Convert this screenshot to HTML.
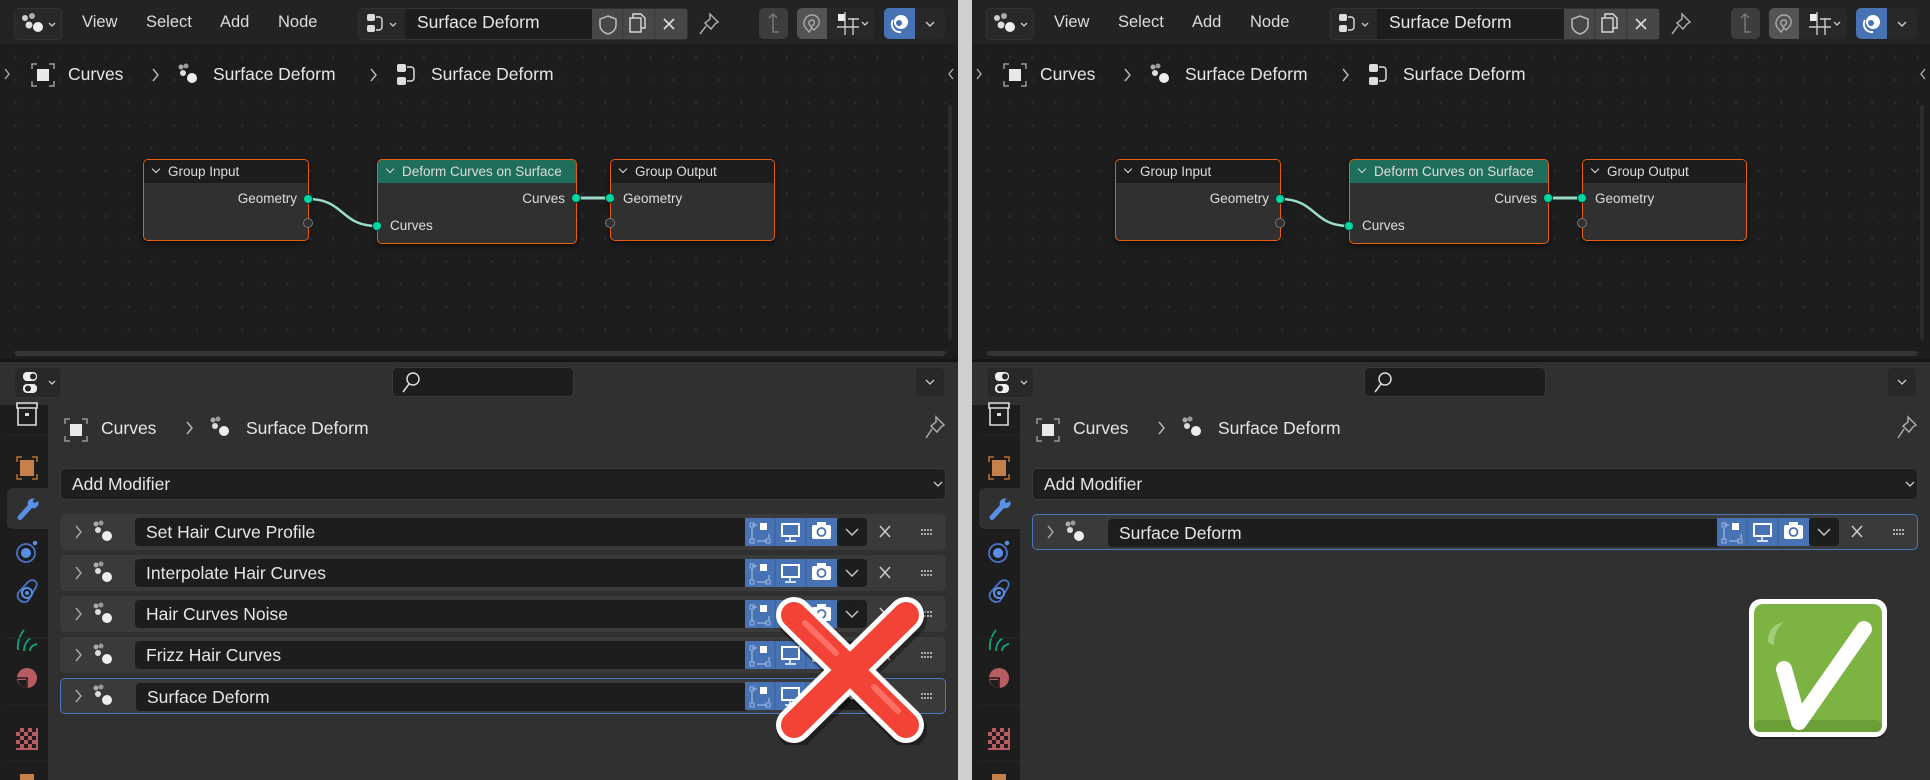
<!DOCTYPE html>
<html><head><meta charset="utf-8"><style>
*{box-sizing:border-box;margin:0;padding:0}
body{width:1930px;height:780px;background:#cfcfcf;position:relative;overflow:hidden;font-family:"Liberation Sans","DejaVu Sans",sans-serif;color:#e0e0e0}
.panel{position:absolute;top:0;width:958px;height:780px;background:#1d1d1d;overflow:hidden}
.a{position:absolute}
.hdr{left:0;top:0;width:958px;height:44px;background:#232323}
.ed{left:0;top:44px;width:958px;height:315px;background-color:#1d1d1d;background-image:radial-gradient(circle,#2a2a2a 1.3px,transparent 1.6px);background-size:22.7px 22.7px;background-position:4px 2px}
.btn{border-radius:5px;background:#282828;border:1px solid #333}
.t16{font-size:16.5px;color:#dcdcdc;line-height:20px}
.t17{font-size:17.5px;color:#e6e6e6;line-height:20px}
.node{border:1.5px solid #e8600c;border-radius:5px;background:#303030;box-shadow:0 3px 6px rgba(0,0,0,.5)}
.nh{position:absolute;left:0;top:0;right:0;height:23px;background:#1d1d1d;border-radius:4px 4px 0 0;font-size:13.5px;color:#ddd;line-height:23px;padding-left:24px;white-space:nowrap}
.nh:before{content:"";position:absolute;left:9px;top:6px;width:5px;height:5px;border-right:1.4px solid #ddd;border-bottom:1.4px solid #ddd;transform:rotate(45deg)}
.nt{position:absolute;font-size:13.5px;color:#ddd}
.sock{position:absolute;width:10px;height:10px;border-radius:50%;background:#00d6a3;border:1px solid #0a3a30}
.sock.e{background:#303030;border:1.3px solid #777}
.props{left:0;top:362px;width:958px;height:418px;background:#303030}
.tabs{left:0;top:405px;width:48px;height:375px;background:#1d1d1d}
.row{position:absolute;left:60px;width:886px;height:36px;background:#3a3a3a;border-radius:5px}
.row.sel{border:1px solid #4a77c2}
.nm{position:absolute;left:75px;top:4px;width:611px;height:28px;background:#1d1d1d;border-radius:4px 0 0 4px;font-size:17.5px;line-height:28px;padding-left:11px;color:#e6e6e6}
</style></head><body>

<div class="panel" style="left:0">
 <div class="a hdr"></div>
 <div class="a btn" style="left:14px;top:8px;width:48px;height:32px"></div>
 <svg class="a" style="left:20px;top:12px" width="40" height="24"><circle cx="5" cy="6" r="3" fill="#ccc"/><circle cx="12" cy="4" r="3" fill="#aaa"/><circle cx="9" cy="13" r="3.5" fill="#ddd"/><circle cx="18" cy="15" r="5" fill="#eee"/><path d="M29 11l3 3 3-3" stroke="#ccc" fill="none" stroke-width="1.3"/></svg>
 <div class="a t16" style="left:82px;top:12px">View</div>
 <div class="a t16" style="left:146px;top:12px">Select</div>
 <div class="a t16" style="left:220px;top:12px">Add</div>
 <div class="a t16" style="left:278px;top:12px">Node</div>
 <div class="a btn" style="left:358px;top:8px;width:330px;height:32px"></div>
 <svg class="a" style="left:364px;top:12px" width="38" height="24"><rect x="3" y="2" width="8" height="7" rx="2" fill="#ddd"/><rect x="3" y="13" width="8" height="7" rx="2" fill="#ddd"/><path d="M12 5h3a3 3 0 0 1 3 3v7a3 3 0 0 1-3 3h-3" stroke="#ddd" fill="none" stroke-width="1.4"/><path d="M26 11l3 3 3-3" stroke="#ccc" fill="none" stroke-width="1.3"/></svg>
 <div class="a" style="left:405px;top:9px;width:187px;height:30px;background:#1d1d1d"></div>
 <div class="a t17" style="left:417px;top:12px">Surface Deform</div>
 <div class="a" style="left:592px;top:9px;width:95px;height:30px;background:#474747"></div>
 <svg class="a" style="left:592px;top:9px" width="95" height="30"><path d="M16 7l8 3v6c0 5-4 8-8 9-4-1-8-4-8-9v-6z" stroke="#bbb" fill="none" stroke-width="1.5"/><rect x="38" y="9" width="11" height="14" stroke="#ddd" fill="none" stroke-width="1.4"/><path d="M41 9V5h8l4 4v10h-4" stroke="#ddd" fill="none" stroke-width="1.4"/><path d="M72 10l10 10M82 10l-10 10" stroke="#ddd" stroke-width="1.6"/><path d="M31 0v30M63 0v30" stroke="#3a3a3a"/></svg>
 <svg class="a" style="left:696px;top:10px" width="28" height="28"><path d="M14 4l8 8-3 2-4 5-6-6 5-4z M10 16l-6 8" stroke="#aaa" fill="none" stroke-width="1.5"/></svg>
 <div class="a" style="left:759px;top:8px;width:29px;height:31px;background:#3d3d3d;border-radius:5px"></div>
 <svg class="a" style="left:759px;top:8px" width="29" height="31"><path d="M10 10l4-4 4 4M14 6v18h6" stroke="#777" fill="none" stroke-width="1.5"/></svg>
 <div class="a" style="left:797px;top:8px;width:78px;height:31px;background:#282828;border-radius:5px"></div>
 <div class="a" style="left:797px;top:8px;width:30px;height:31px;background:#545454;border-radius:5px 0 0 5px"></div>
 <svg class="a" style="left:797px;top:8px" width="78" height="31"><path d="M12 24l-4-5c-3-5 1-12 7-12s9 6 6 11l-4 4-3-3 3-3c1-2 0-4-2-4s-4 2-3 4l3 4z" stroke="#aaa" fill="none" stroke-width="1.4"/><rect x="41" y="6" width="7" height="7" fill="#eee"/><path d="M48 4v23M40 19h22M56 10v17M51 11h11" stroke="#ccc" stroke-width="1.4"/><path d="M65 14l3 3 3-3" stroke="#ccc" fill="none" stroke-width="1.3"/></svg>
 <div class="a" style="left:884px;top:8px;width:61px;height:31px;background:#282828;border-radius:5px"></div>
 <div class="a" style="left:884px;top:8px;width:31px;height:31px;background:#4772b3;border-radius:5px 0 0 5px"></div>
 <svg class="a" style="left:884px;top:8px" width="61" height="31"><circle cx="17" cy="14" r="7" fill="#fff"/><path d="M9 12a8 8 0 0 0 8 12" stroke="#fff" fill="none" stroke-width="2"/><circle cx="15" cy="15" r="3" fill="#4772b3"/><path d="M42 14l4 4 4-4" stroke="#ccc" fill="none" stroke-width="1.4"/></svg>

 <div class="a ed"></div>
 <svg class="a" style="left:2px;top:66px" width="10" height="16"><path d="M3 3l4 5-4 5" stroke="#aaa" fill="none" stroke-width="1.4"/></svg>
 <svg class="a" style="left:30px;top:62px" width="26" height="26"><path d="M2 7V2h5M19 2h5v5M24 19v5h-5M7 24H2v-5" stroke="#999" fill="none" stroke-width="1.5"/><rect x="7" y="7" width="12" height="12" fill="#e8e8e8"/></svg>
 <div class="a t17" style="left:68px;top:64px">Curves</div>
 <svg class="a" style="left:150px;top:66px" width="12" height="18"><path d="M3 3l5 6-5 6" stroke="#bbb" fill="none" stroke-width="1.4"/></svg>
 <svg class="a" style="left:176px;top:62px" width="26" height="26"><circle cx="5" cy="5" r="2.5" fill="#aaa"/><circle cx="10" cy="4" r="2.5" fill="#999"/><circle cx="7" cy="11" r="3" fill="#ddd"/><circle cx="16" cy="16" r="5" fill="#eee"/></svg>
 <div class="a t17" style="left:213px;top:64px">Surface Deform</div>
 <svg class="a" style="left:368px;top:66px" width="12" height="18"><path d="M3 3l5 6-5 6" stroke="#bbb" fill="none" stroke-width="1.4"/></svg>
 <svg class="a" style="left:394px;top:62px" width="26" height="26"><rect x="3" y="2" width="9" height="8" rx="2" fill="#ddd"/><rect x="3" y="15" width="9" height="8" rx="2" fill="#ddd"/><path d="M13 5h4a3 3 0 0 1 3 3v8a3 3 0 0 1-3 3h-4" stroke="#ddd" fill="none" stroke-width="1.5"/></svg>
 <div class="a t17" style="left:431px;top:64px">Surface Deform</div>
 <svg class="a" style="left:945px;top:66px" width="12" height="16"><path d="M8 3l-4 5 4 5" stroke="#aaa" fill="none" stroke-width="1.4"/></svg>
 <div class="a" style="left:948px;top:105px;width:4px;height:235px;background:#2c2c2c;border-radius:2px"></div>
 <div class="a" style="left:15px;top:351px;width:930px;height:5px;background:#343434;border-radius:3px"></div>

 <svg class="a" style="left:0;top:0" width="958" height="360"><path d="M308 199C345 199 340 226 377 226" stroke="#1a1a1a" stroke-width="5" fill="none"/><path d="M308 199C345 199 340 226 377 226" stroke="#9adcc8" stroke-width="2.5" fill="none"/><path d="M576 198H611" stroke="#9adcc8" stroke-width="3"/></svg>
 <div class="a node" style="left:143px;top:159px;width:166px;height:82px"><div class="nh">Group Input</div><div class="nt" style="right:11px;top:31px">Geometry</div></div>
 <div class="a node" style="left:377px;top:159px;width:200px;height:85px"><div class="nh" style="background:#1f6e5c">Deform Curves on Surface</div><div class="nt" style="right:11px;top:31px">Curves</div><div class="nt" style="left:12px;top:58px">Curves</div></div>
 <div class="a node" style="left:610px;top:159px;width:165px;height:82px"><div class="nh">Group Output</div><div class="nt" style="left:12px;top:31px">Geometry</div></div>
 <div class="sock" style="left:303px;top:194px"></div><div class="sock e" style="left:303px;top:218px"></div>
 <div class="sock" style="left:372px;top:221px"></div><div class="sock" style="left:571px;top:193px"></div>
 <div class="sock" style="left:605px;top:193px"></div><div class="sock e" style="left:605px;top:218px"></div>

 <div class="a" style="left:0;top:359px;width:958px;height:3px;background:#161616"></div>
 <div class="a props"></div>
 <div class="a btn" style="left:14px;top:367px;width:48px;height:31px"></div>
 <svg class="a" style="left:20px;top:369px" width="40" height="28"><rect x="3" y="3" width="14" height="9" rx="4" fill="#eee"/><rect x="3" y="15" width="14" height="9" rx="4" fill="#eee"/><circle cx="13" cy="7.5" r="3" fill="#282828"/><circle cx="8" cy="19.5" r="3" fill="#282828"/><path d="M29 12l3 3 3-3" stroke="#ccc" fill="none" stroke-width="1.3"/></svg>
 <div class="a" style="left:392px;top:367px;width:182px;height:30px;background:#1d1d1d;border-radius:5px;border:1px solid #3a3a3a"></div>
 <svg class="a" style="left:398px;top:369px" width="26" height="26"><circle cx="15" cy="10" r="6" stroke="#ddd" fill="none" stroke-width="1.5"/><path d="M11 15l-6 8" stroke="#ddd" stroke-width="1.5"/></svg>
 <div class="a btn" style="left:915px;top:367px;width:30px;height:30px"></div>
 <svg class="a" style="left:915px;top:367px" width="30" height="30"><path d="M11 13l4 4 4-4" stroke="#ccc" fill="none" stroke-width="1.3"/></svg>

 <div class="a tabs"></div>
 <div class="a" style="left:7px;top:488px;width:41px;height:41px;background:#303030;border-radius:6px 0 0 6px"></div>
 <svg class="a" style="left:0;top:398px" width="48" height="382">
  <path d="M17 5h20v5H17zM18 10v17h18V10" stroke="#ddd" fill="none" stroke-width="1.6"/><rect x="25" y="15" width="4" height="3" fill="#ddd"/>
  <path d="M17 64v-5h5M32 59h5v5M37 76v5h-5M22 81h-5v-5" stroke="#b87333" fill="none" stroke-width="1.5"/><rect x="20" y="62" width="14" height="16" fill="#c8804a"/>
  <path d="M35 101a5 5 0 0 0-7 6l-10 11a2.5 2.5 0 0 0 4 3l10-11a5 5 0 0 0 6-7l-3 2-2-1v-2z" fill="#5b8fe6"/>
  <circle cx="26" cy="155" r="9" stroke="#4a74c9" fill="none" stroke-width="1.8"/><circle cx="26" cy="155" r="5" fill="#5b8fe6"/><circle cx="35" cy="145" r="3" fill="#5b8fe6" stroke="#1d1d1d" stroke-width="1.5"/>
  <path d="M18 195c-2 6 4 11 10 8l8-14c3-6-4-9-8-5z" stroke="#4a74c9" fill="none" stroke-width="1.8"/><circle cx="27" cy="195" r="5" stroke="#5b8fe6" fill="none" stroke-width="2"/><circle cx="27" cy="195" r="2" fill="#5b8fe6"/>
  <path d="M18 252c-1-8 2-15 6-20M24 253c0-6 3-11 7-13M30 253c0-4 3-6 7-7" stroke="#10a37f" fill="none" stroke-width="1.8"/>
  <circle cx="27" cy="280" r="10" fill="#b85c63"/><path d="M17 280h10v10" stroke="#1d1d1d" fill="none" stroke-width="1.6"/><path d="M18 282a9 9 0 0 0 8 8v-8z" fill="#1d1d1d"/>
  <rect x="16" y="330" width="22" height="22" fill="#b85c63"/>
  <g fill="#1d1d1d"><rect x="16" y="330" width="4" height="4"/><rect x="24" y="330" width="4" height="4"/><rect x="32" y="330" width="4" height="4"/><rect x="20" y="334" width="4" height="4"/><rect x="28" y="334" width="4" height="4"/><rect x="16" y="338" width="4" height="4"/><rect x="24" y="338" width="4" height="4"/><rect x="32" y="338" width="4" height="4"/><rect x="20" y="342" width="4" height="4"/><rect x="28" y="342" width="4" height="4"/><rect x="16" y="346" width="4" height="4"/><rect x="24" y="346" width="4" height="4"/><rect x="32" y="346" width="4" height="4"/></g>
  <rect x="20" y="376" width="14" height="6" fill="#c8804a"/>
  <path d="M7 37h41M7 240h41M7 307h41M7 363h41" stroke="#262626"/>
 </svg>

 <svg class="a" style="left:63px;top:417px" width="26" height="26"><path d="M2 7V2h5M19 2h5v5M24 19v5h-5M7 24H2v-5" stroke="#999" fill="none" stroke-width="1.5"/><rect x="7" y="7" width="12" height="12" fill="#e8e8e8"/></svg>
 <div class="a t17" style="left:101px;top:418px">Curves</div>
 <svg class="a" style="left:184px;top:419px" width="12" height="18"><path d="M3 3l5 6-5 6" stroke="#bbb" fill="none" stroke-width="1.4"/></svg>
 <svg class="a" style="left:208px;top:415px" width="26" height="26"><circle cx="5" cy="5" r="2.5" fill="#aaa"/><circle cx="10" cy="4" r="2.5" fill="#999"/><circle cx="7" cy="11" r="3" fill="#ddd"/><circle cx="16" cy="16" r="5" fill="#eee"/></svg>
 <div class="a t17" style="left:246px;top:418px">Surface Deform</div>
 <svg class="a" style="left:920px;top:414px" width="28" height="28"><path d="M16 3l8 8-3 2-4 5-6-6 5-4z M12 15l-6 9" stroke="#aaa" fill="none" stroke-width="1.5"/></svg>
 <div class="a" style="left:60px;top:468px;width:886px;height:32px;background:#1f1f1f;border:1px solid #3a3a3a;border-radius:5px"></div>
 <div class="a t17" style="left:72px;top:474px">Add Modifier</div>
 <svg class="a" style="left:932px;top:478px" width="12" height="12"><path d="M2 4l4 4 4-4" stroke="#ccc" fill="none" stroke-width="1.3"/></svg>

 <div class="row" style="top:514px"><div class="nm">Set Hair Curve Profile</div></div>
 <div class="row" style="top:555px"><div class="nm">Interpolate Hair Curves</div></div>
 <div class="row" style="top:596px"><div class="nm">Hair Curves Noise</div></div>
 <div class="row" style="top:637px"><div class="nm">Frizz Hair Curves</div></div>
 <div class="row sel" style="top:678px"><div class="nm">Surface Deform</div></div>
 <svg class="a" style="left:60px;top:514px" width="886" height="200">
  <defs><g id="ctl">
   <path d="M16 12l5 6-5 6" stroke="#aaa" fill="none" stroke-width="1.4"/>
   <circle cx="36" cy="10" r="2.5" fill="#aaa"/><circle cx="41" cy="9" r="2.5" fill="#999"/><circle cx="38" cy="16" r="3" fill="#ddd"/><circle cx="47" cy="22" r="5" fill="#eee"/>
   <rect x="685" y="4" width="30" height="28" fill="#4772b3"/><rect x="715" y="4" width="31" height="28" fill="#4772b3"/><rect x="746" y="4" width="31" height="28" fill="#4772b3"/>
   <path d="M715 4v28M746 4v28" stroke="#3a5f98"/>
   <path d="M692 11h5M692 14v11M697 27h10M709 20v4" stroke="#9db5e0" fill="none" stroke-width="1.3"/><rect x="700" y="9" width="7" height="7" fill="#fff"/><rect x="690" y="9" width="4" height="4" stroke="#9db5e0" fill="none"/><rect x="690" y="25" width="4" height="4" stroke="#9db5e0" fill="none"/><rect x="706" y="25" width="4" height="4" stroke="#9db5e0" fill="none"/>
   <rect x="722" y="10" width="17" height="12" stroke="#fff" fill="none" stroke-width="2"/><path d="M730 22v4M725 27h11" stroke="#fff" stroke-width="1.5"/>
   <rect x="752" y="11" width="19" height="14" rx="2" fill="#fff"/><rect x="757" y="8" width="9" height="4" fill="#fff"/><circle cx="761.5" cy="18" r="4" stroke="#4772b3" fill="none" stroke-width="1.8"/>
   <rect x="777" y="4" width="30" height="28" rx="4" fill="#1d1d1d"/><path d="M786 15l6 6 6-6" stroke="#ccc" fill="none" stroke-width="1.4"/>
   <path d="M820 12l10 11M830 12l-10 11" stroke="#ccc" stroke-width="1.5"/>
   <g fill="#aaa"><rect x="861" y="15" width="2" height="2"/><rect x="864" y="15" width="2" height="2"/><rect x="867" y="15" width="2" height="2"/><rect x="870" y="15" width="2" height="2"/><rect x="861" y="19" width="2" height="2"/><rect x="864" y="19" width="2" height="2"/><rect x="867" y="19" width="2" height="2"/><rect x="870" y="19" width="2" height="2"/></g>
  </g></defs>
  <use href="#ctl" y="0"/><use href="#ctl" y="41"/><use href="#ctl" y="82"/><use href="#ctl" y="123"/><use href="#ctl" y="164"/>
 </svg>
</div>

<div class="panel" style="left:972px">
 <div class="a hdr"></div>
 <div class="a btn" style="left:14px;top:8px;width:48px;height:32px"></div>
 <svg class="a" style="left:20px;top:12px" width="40" height="24"><circle cx="5" cy="6" r="3" fill="#ccc"/><circle cx="12" cy="4" r="3" fill="#aaa"/><circle cx="9" cy="13" r="3.5" fill="#ddd"/><circle cx="18" cy="15" r="5" fill="#eee"/><path d="M29 11l3 3 3-3" stroke="#ccc" fill="none" stroke-width="1.3"/></svg>
 <div class="a t16" style="left:82px;top:12px">View</div>
 <div class="a t16" style="left:146px;top:12px">Select</div>
 <div class="a t16" style="left:220px;top:12px">Add</div>
 <div class="a t16" style="left:278px;top:12px">Node</div>
 <div class="a btn" style="left:358px;top:8px;width:330px;height:32px"></div>
 <svg class="a" style="left:364px;top:12px" width="38" height="24"><rect x="3" y="2" width="8" height="7" rx="2" fill="#ddd"/><rect x="3" y="13" width="8" height="7" rx="2" fill="#ddd"/><path d="M12 5h3a3 3 0 0 1 3 3v7a3 3 0 0 1-3 3h-3" stroke="#ddd" fill="none" stroke-width="1.4"/><path d="M26 11l3 3 3-3" stroke="#ccc" fill="none" stroke-width="1.3"/></svg>
 <div class="a" style="left:405px;top:9px;width:187px;height:30px;background:#1d1d1d"></div>
 <div class="a t17" style="left:417px;top:12px">Surface Deform</div>
 <div class="a" style="left:592px;top:9px;width:95px;height:30px;background:#474747"></div>
 <svg class="a" style="left:592px;top:9px" width="95" height="30"><path d="M16 7l8 3v6c0 5-4 8-8 9-4-1-8-4-8-9v-6z" stroke="#bbb" fill="none" stroke-width="1.5"/><rect x="38" y="9" width="11" height="14" stroke="#ddd" fill="none" stroke-width="1.4"/><path d="M41 9V5h8l4 4v10h-4" stroke="#ddd" fill="none" stroke-width="1.4"/><path d="M72 10l10 10M82 10l-10 10" stroke="#ddd" stroke-width="1.6"/><path d="M31 0v30M63 0v30" stroke="#3a3a3a"/></svg>
 <svg class="a" style="left:696px;top:10px" width="28" height="28"><path d="M14 4l8 8-3 2-4 5-6-6 5-4z M10 16l-6 8" stroke="#aaa" fill="none" stroke-width="1.5"/></svg>
 <div class="a" style="left:759px;top:8px;width:29px;height:31px;background:#3d3d3d;border-radius:5px"></div>
 <svg class="a" style="left:759px;top:8px" width="29" height="31"><path d="M10 10l4-4 4 4M14 6v18h6" stroke="#777" fill="none" stroke-width="1.5"/></svg>
 <div class="a" style="left:797px;top:8px;width:78px;height:31px;background:#282828;border-radius:5px"></div>
 <div class="a" style="left:797px;top:8px;width:30px;height:31px;background:#545454;border-radius:5px 0 0 5px"></div>
 <svg class="a" style="left:797px;top:8px" width="78" height="31"><path d="M12 24l-4-5c-3-5 1-12 7-12s9 6 6 11l-4 4-3-3 3-3c1-2 0-4-2-4s-4 2-3 4l3 4z" stroke="#aaa" fill="none" stroke-width="1.4"/><rect x="41" y="6" width="7" height="7" fill="#eee"/><path d="M48 4v23M40 19h22M56 10v17M51 11h11" stroke="#ccc" stroke-width="1.4"/><path d="M65 14l3 3 3-3" stroke="#ccc" fill="none" stroke-width="1.3"/></svg>
 <div class="a" style="left:884px;top:8px;width:61px;height:31px;background:#282828;border-radius:5px"></div>
 <div class="a" style="left:884px;top:8px;width:31px;height:31px;background:#4772b3;border-radius:5px 0 0 5px"></div>
 <svg class="a" style="left:884px;top:8px" width="61" height="31"><circle cx="17" cy="14" r="7" fill="#fff"/><path d="M9 12a8 8 0 0 0 8 12" stroke="#fff" fill="none" stroke-width="2"/><circle cx="15" cy="15" r="3" fill="#4772b3"/><path d="M42 14l4 4 4-4" stroke="#ccc" fill="none" stroke-width="1.4"/></svg>

 <div class="a ed"></div>
 <svg class="a" style="left:2px;top:66px" width="10" height="16"><path d="M3 3l4 5-4 5" stroke="#aaa" fill="none" stroke-width="1.4"/></svg>
 <svg class="a" style="left:30px;top:62px" width="26" height="26"><path d="M2 7V2h5M19 2h5v5M24 19v5h-5M7 24H2v-5" stroke="#999" fill="none" stroke-width="1.5"/><rect x="7" y="7" width="12" height="12" fill="#e8e8e8"/></svg>
 <div class="a t17" style="left:68px;top:64px">Curves</div>
 <svg class="a" style="left:150px;top:66px" width="12" height="18"><path d="M3 3l5 6-5 6" stroke="#bbb" fill="none" stroke-width="1.4"/></svg>
 <svg class="a" style="left:176px;top:62px" width="26" height="26"><circle cx="5" cy="5" r="2.5" fill="#aaa"/><circle cx="10" cy="4" r="2.5" fill="#999"/><circle cx="7" cy="11" r="3" fill="#ddd"/><circle cx="16" cy="16" r="5" fill="#eee"/></svg>
 <div class="a t17" style="left:213px;top:64px">Surface Deform</div>
 <svg class="a" style="left:368px;top:66px" width="12" height="18"><path d="M3 3l5 6-5 6" stroke="#bbb" fill="none" stroke-width="1.4"/></svg>
 <svg class="a" style="left:394px;top:62px" width="26" height="26"><rect x="3" y="2" width="9" height="8" rx="2" fill="#ddd"/><rect x="3" y="15" width="9" height="8" rx="2" fill="#ddd"/><path d="M13 5h4a3 3 0 0 1 3 3v8a3 3 0 0 1-3 3h-4" stroke="#ddd" fill="none" stroke-width="1.5"/></svg>
 <div class="a t17" style="left:431px;top:64px">Surface Deform</div>
 <svg class="a" style="left:945px;top:66px" width="12" height="16"><path d="M8 3l-4 5 4 5" stroke="#aaa" fill="none" stroke-width="1.4"/></svg>
 <div class="a" style="left:948px;top:105px;width:4px;height:235px;background:#2c2c2c;border-radius:2px"></div>
 <div class="a" style="left:15px;top:351px;width:930px;height:5px;background:#343434;border-radius:3px"></div>
 <svg class="a" style="left:0;top:0" width="958" height="360"><path d="M308 199C345 199 340 226 377 226" stroke="#1a1a1a" stroke-width="5" fill="none"/><path d="M308 199C345 199 340 226 377 226" stroke="#9adcc8" stroke-width="2.5" fill="none"/><path d="M576 198H611" stroke="#9adcc8" stroke-width="3"/></svg>
 <div class="a node" style="left:143px;top:159px;width:166px;height:82px"><div class="nh">Group Input</div><div class="nt" style="right:11px;top:31px">Geometry</div></div>
 <div class="a node" style="left:377px;top:159px;width:200px;height:85px"><div class="nh" style="background:#1f6e5c">Deform Curves on Surface</div><div class="nt" style="right:11px;top:31px">Curves</div><div class="nt" style="left:12px;top:58px">Curves</div></div>
 <div class="a node" style="left:610px;top:159px;width:165px;height:82px"><div class="nh">Group Output</div><div class="nt" style="left:12px;top:31px">Geometry</div></div>
 <div class="sock" style="left:303px;top:194px"></div><div class="sock e" style="left:303px;top:218px"></div>
 <div class="sock" style="left:372px;top:221px"></div><div class="sock" style="left:571px;top:193px"></div>
 <div class="sock" style="left:605px;top:193px"></div><div class="sock e" style="left:605px;top:218px"></div>

 <div class="a" style="left:0;top:359px;width:958px;height:3px;background:#161616"></div>
 <div class="a props"></div>
 <div class="a btn" style="left:14px;top:367px;width:48px;height:31px"></div>
 <svg class="a" style="left:20px;top:369px" width="40" height="28"><rect x="3" y="3" width="14" height="9" rx="4" fill="#eee"/><rect x="3" y="15" width="14" height="9" rx="4" fill="#eee"/><circle cx="13" cy="7.5" r="3" fill="#282828"/><circle cx="8" cy="19.5" r="3" fill="#282828"/><path d="M29 12l3 3 3-3" stroke="#ccc" fill="none" stroke-width="1.3"/></svg>
 <div class="a" style="left:392px;top:367px;width:182px;height:30px;background:#1d1d1d;border-radius:5px;border:1px solid #3a3a3a"></div>
 <svg class="a" style="left:398px;top:369px" width="26" height="26"><circle cx="15" cy="10" r="6" stroke="#ddd" fill="none" stroke-width="1.5"/><path d="M11 15l-6 8" stroke="#ddd" stroke-width="1.5"/></svg>
 <div class="a btn" style="left:915px;top:367px;width:30px;height:30px"></div>
 <svg class="a" style="left:915px;top:367px" width="30" height="30"><path d="M11 13l4 4 4-4" stroke="#ccc" fill="none" stroke-width="1.3"/></svg>
 <div class="a tabs"></div>
 <div class="a" style="left:7px;top:488px;width:41px;height:41px;background:#303030;border-radius:6px 0 0 6px"></div>
 <svg class="a" style="left:0;top:398px" width="48" height="382">
  <path d="M17 5h20v5H17zM18 10v17h18V10" stroke="#ddd" fill="none" stroke-width="1.6"/><rect x="25" y="15" width="4" height="3" fill="#ddd"/>
  <path d="M17 64v-5h5M32 59h5v5M37 76v5h-5M22 81h-5v-5" stroke="#b87333" fill="none" stroke-width="1.5"/><rect x="20" y="62" width="14" height="16" fill="#c8804a"/>
  <path d="M35 101a5 5 0 0 0-7 6l-10 11a2.5 2.5 0 0 0 4 3l10-11a5 5 0 0 0 6-7l-3 2-2-1v-2z" fill="#5b8fe6"/>
  <circle cx="26" cy="155" r="9" stroke="#4a74c9" fill="none" stroke-width="1.8"/><circle cx="26" cy="155" r="5" fill="#5b8fe6"/><circle cx="35" cy="145" r="3" fill="#5b8fe6" stroke="#1d1d1d" stroke-width="1.5"/>
  <path d="M18 195c-2 6 4 11 10 8l8-14c3-6-4-9-8-5z" stroke="#4a74c9" fill="none" stroke-width="1.8"/><circle cx="27" cy="195" r="5" stroke="#5b8fe6" fill="none" stroke-width="2"/><circle cx="27" cy="195" r="2" fill="#5b8fe6"/>
  <path d="M18 252c-1-8 2-15 6-20M24 253c0-6 3-11 7-13M30 253c0-4 3-6 7-7" stroke="#10a37f" fill="none" stroke-width="1.8"/>
  <circle cx="27" cy="280" r="10" fill="#b85c63"/><path d="M17 280h10v10" stroke="#1d1d1d" fill="none" stroke-width="1.6"/><path d="M18 282a9 9 0 0 0 8 8v-8z" fill="#1d1d1d"/>
  <rect x="16" y="330" width="22" height="22" fill="#b85c63"/>
  <g fill="#1d1d1d"><rect x="16" y="330" width="4" height="4"/><rect x="24" y="330" width="4" height="4"/><rect x="32" y="330" width="4" height="4"/><rect x="20" y="334" width="4" height="4"/><rect x="28" y="334" width="4" height="4"/><rect x="16" y="338" width="4" height="4"/><rect x="24" y="338" width="4" height="4"/><rect x="32" y="338" width="4" height="4"/><rect x="20" y="342" width="4" height="4"/><rect x="28" y="342" width="4" height="4"/><rect x="16" y="346" width="4" height="4"/><rect x="24" y="346" width="4" height="4"/><rect x="32" y="346" width="4" height="4"/></g>
  <rect x="20" y="376" width="14" height="6" fill="#c8804a"/>
  <path d="M7 37h41M7 240h41M7 307h41M7 363h41" stroke="#262626"/>
 </svg>
 <svg class="a" style="left:63px;top:417px" width="26" height="26"><path d="M2 7V2h5M19 2h5v5M24 19v5h-5M7 24H2v-5" stroke="#999" fill="none" stroke-width="1.5"/><rect x="7" y="7" width="12" height="12" fill="#e8e8e8"/></svg>
 <div class="a t17" style="left:101px;top:418px">Curves</div>
 <svg class="a" style="left:184px;top:419px" width="12" height="18"><path d="M3 3l5 6-5 6" stroke="#bbb" fill="none" stroke-width="1.4"/></svg>
 <svg class="a" style="left:208px;top:415px" width="26" height="26"><circle cx="5" cy="5" r="2.5" fill="#aaa"/><circle cx="10" cy="4" r="2.5" fill="#999"/><circle cx="7" cy="11" r="3" fill="#ddd"/><circle cx="16" cy="16" r="5" fill="#eee"/></svg>
 <div class="a t17" style="left:246px;top:418px">Surface Deform</div>
 <svg class="a" style="left:920px;top:414px" width="28" height="28"><path d="M16 3l8 8-3 2-4 5-6-6 5-4z M12 15l-6 9" stroke="#aaa" fill="none" stroke-width="1.5"/></svg>
 <div class="a" style="left:60px;top:468px;width:886px;height:32px;background:#1f1f1f;border:1px solid #3a3a3a;border-radius:5px"></div>
 <div class="a t17" style="left:72px;top:474px">Add Modifier</div>
 <svg class="a" style="left:932px;top:478px" width="12" height="12"><path d="M2 4l4 4 4-4" stroke="#ccc" fill="none" stroke-width="1.3"/></svg>
 <div class="row sel" style="top:514px"><div class="nm">Surface Deform</div></div>
 <svg class="a" style="left:60px;top:514px" width="886" height="40"><use href="#ctl" y="0"/></svg>
</div>

<svg class="a" style="left:770px;top:595px" width="160" height="150">
 <g stroke-linecap="round">
  <path d="M24 20L136 130M136 20L24 130" stroke="#000" stroke-opacity=".35" stroke-width="38" transform="translate(2,4)"/>
  <path d="M24 20L136 130M136 20L24 130" stroke="#fff" stroke-width="36"/>
  <path d="M24 20L136 130M136 20L24 130" stroke="#f34336" stroke-width="26"/>
  <path d="M35 28L66 58M104 92L128 116" stroke="#ff7a70" stroke-width="6" opacity=".8"/>
 </g>
</svg>
<svg class="a" style="left:1744px;top:594px" width="148" height="148">
 <rect x="6" y="6" width="136" height="136" rx="12" fill="#000" opacity=".3" transform="translate(1,3)"/>
 <rect x="5" y="5" width="138" height="138" rx="12" fill="#fff"/>
 <rect x="10" y="10" width="128" height="128" rx="9" fill="#7cb342"/>
 <rect x="10" y="126" width="128" height="12" rx="6" fill="#6a9f37"/>
 <path d="M24 48c0-12 6-18 16-20-8 6-10 14-10 24z" fill="#a5cc7a"/>
 <path d="M40 75L55 128L120 35" stroke="#fff" stroke-width="16" fill="none" stroke-linecap="round" stroke-linejoin="round"/>
</svg>
</body></html>
